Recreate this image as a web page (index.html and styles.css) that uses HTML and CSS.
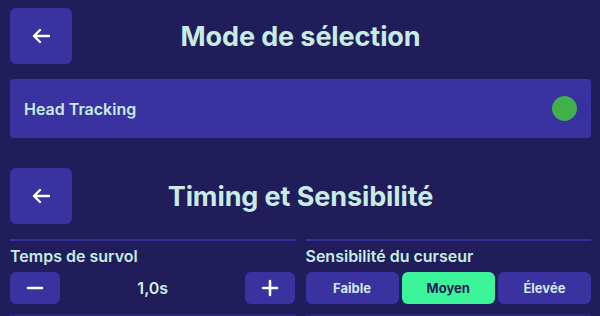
FILE: index.html
```html
<!DOCTYPE html>
<html lang="fr">
<head>
<meta charset="utf-8">
<link rel="stylesheet" href="styles.css">
</head>
<body>
<div class="page">
  <section class="section">
    <header class="header">
      <button class="back" aria-label="Retour">
        <svg width="20" height="16" viewBox="0 0 20 16"><path d="M18 8H3M9 2L3 8l6 6" fill="none" stroke="#fff" stroke-width="2.4" stroke-linecap="round" stroke-linejoin="round"/></svg>
      </button>
      <h1 class="title">Mode de sélection</h1>
      <span></span>
    </header>
    <div class="row">
      <span class="row-label">Head Tracking</span>
      <span class="toggle"><span class="thumb"></span></span>
    </div>
  </section>

  <section class="section second">
    <header class="header">
      <button class="back" aria-label="Retour">
        <svg width="20" height="16" viewBox="0 0 20 16"><path d="M18 8H3M9 2L3 8l6 6" fill="none" stroke="#fff" stroke-width="2.4" stroke-linecap="round" stroke-linejoin="round"/></svg>
      </button>
      <h1 class="title">Timing et Sensibilité</h1>
      <span></span>
    </header>
    <div class="cols">
      <div class="col">
        <div class="label">Temps de survol</div>
        <div class="stepper">
          <button class="step" aria-label="Moins">
            <svg width="18" height="18" viewBox="0 0 18 18"><path d="M2 9h14" stroke="#fff" stroke-width="2.6" stroke-linecap="round"/></svg>
          </button>
          <span class="value">1,0s</span>
          <button class="step" aria-label="Plus">
            <svg width="18" height="18" viewBox="0 0 18 18"><path d="M2 9h14M9 2v14" stroke="#fff" stroke-width="2.6" stroke-linecap="round"/></svg>
          </button>
        </div>
      </div>
      <div class="col">
        <div class="label">Sensibilité du curseur</div>
        <div class="seg">
          <button class="opt">Faible</button>
          <button class="opt active">Moyen</button>
          <button class="opt">Élevée</button>
        </div>
      </div>
    </div>
  </section>
</div>
</body>
</html>
```
FILE: styles.css
```css
* { box-sizing: border-box; }
html, body {
  margin: 0;
  background: #211c5a;
  font-family: Inter, "Noto Sans", sans-serif;
  color: #c6ece4;
  overflow: hidden;
}
.page {
  width: 600px;
  height: 316px;
  padding: 8px 9px 0 10px;
}
button {
  font-family: inherit;
  border: none;
  cursor: pointer;
}
.header {
  display: grid;
  grid-template-columns: 62px 1fr 62px;
  align-items: center;
}
.back {
  width: 62px;
  height: 56px;
  border-radius: 6px;
  background: #3a32a1;
  display: flex;
  align-items: center;
  justify-content: center;
  padding: 0;
}
.title {
  margin: 0;
  text-align: center;
  font-size: 27px;
  font-weight: 700;
  color: #c6ece4;
  letter-spacing: -0.1px;
}
.row {
  margin-top: 15px;
  height: 59px;
  background: #3a32a1;
  border-radius: 4px;
  display: flex;
  align-items: center;
  justify-content: space-between;
  padding: 0 3px 0 14px;
}
.row-label {
  font-size: 16px;
  font-weight: 600;
}
.toggle {
  width: 36px;
  height: 26px;
  border-radius: 13px;
  background: #3630a0;
  display: flex;
  align-items: center;
}
.thumb {
  width: 25px;
  height: 25px;
  border-radius: 50%;
  background: #40b04a;
}
.second { margin-top: 30px; }
.cols {
  margin-top: 15px;
  display: grid;
  grid-template-columns: 1fr 1fr;
  column-gap: 10px;
}
.col {
  border-top: 2px solid #352e93;
  border-bottom: 2px solid #2b2578;
  padding: 6px 0 10px;
}
.label {
  font-size: 16px;
  font-weight: 600;
  line-height: 18px;
}
.stepper {
  margin-top: 7px;
  display: flex;
  align-items: center;
  justify-content: space-between;
}
.step {
  width: 50px;
  height: 32px;
  border-radius: 6px;
  background: #3a32a1;
  display: flex;
  align-items: center;
  justify-content: center;
  padding: 0;
}
.value {
  font-size: 16px;
  font-weight: 600;
  color: #d6eee9;
}
.seg {
  margin-top: 7px;
  display: grid;
  grid-template-columns: 1fr 1fr 1fr;
  column-gap: 3px;
}
.opt {
  height: 32px;
  border-radius: 6px;
  background: #3a32a1;
  color: #d0e6e8;
  font-size: 13px;
  font-weight: 700;
}
.opt.active {
  background: #3cf59a;
  color: #1f1c58;
}
```
